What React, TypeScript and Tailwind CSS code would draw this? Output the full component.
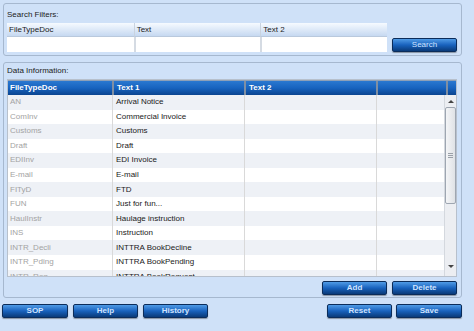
import React from 'react';

type Row = { code: string; text: string };

const rows: Row[] = [
    { code: 'AN', text: 'Arrival Notice' },
    { code: 'ComInv', text: 'Commercial Invoice' },
    { code: 'Customs', text: 'Customs' },
    { code: 'Draft', text: 'Draft' },
    { code: 'EDIInv', text: 'EDI Invoice' },
    { code: 'E-mail', text: 'E-mail' },
    { code: 'FITyD', text: 'FTD' },
    { code: 'FUN', text: 'Just for fun...' },
    { code: 'HaulInstr', text: 'Haulage instruction' },
    { code: 'INS', text: 'Instruction' },
    { code: 'INTR_Decli', text: 'INTTRA BookDecline' },
    { code: 'INTR_Pding', text: 'INTTRA BookPending' },
    { code: 'INTR_Req', text: 'INTTRA BookRequest' },
];

function BlueButton({ label, className = '' }: { label: string; className?: string }) {
    return (
        <button
            type="button"
            className={
                'h-[14px] w-[65px] rounded-[2px] border border-[#0b2c5a] bg-gradient-to-b from-[#4f9be6] via-[#1862bd] to-[#0a3b7a] text-[8px] leading-[12px] font-bold text-[#cfe3ff] shadow-[0_1px_1px_rgba(0,0,0,0.35)] ' +
                className
            }
        >
            {label}
        </button>
    );
}

function Scrollbar() {
    return (
        <div className="w-[12px] h-full bg-[#eceef2] border-l border-[#d4d8de] flex flex-col items-center">
            {/* up arrow */}
            <div className="h-[12px] flex items-center justify-center">
                <div className="w-0 h-0 border-l-[3px] border-r-[3px] border-b-[3px] border-l-transparent border-r-transparent border-b-[#444]" />
            </div>
            {/* thumb */}
            <div className="w-[11px] h-[97px] rounded-[2px] border border-[#9ea6b1] bg-gradient-to-r from-[#f4f5f7] to-[#dfe2e6] flex flex-col items-center justify-center gap-[1px]">
                <div className="w-[5px] h-[1px] bg-[#9aa0a8]" />
                <div className="w-[5px] h-[1px] bg-[#9aa0a8]" />
                <div className="w-[5px] h-[1px] bg-[#9aa0a8]" />
            </div>
            <div className="flex-1" />
            {/* down arrow */}
            <div className="h-[14px] flex items-start justify-center pt-[3px]">
                <div className="w-0 h-0 border-l-[3px] border-r-[3px] border-t-[3px] border-l-transparent border-r-transparent border-t-[#444]" />
            </div>
        </div>
    );
}

export default function App() {
    return (
        <div
            className="w-[474px] h-[331px] bg-[#cfe1f8] pt-[3px] text-[8px] leading-[10px] text-[#1e1e1e] overflow-hidden"
            style={{ fontFamily: '"Liberation Sans", Arial, sans-serif' }}
        >
            {/* Search filters */}
            <div className="ml-[3px] w-[459px] h-[53px] border border-[#a6b8cf] rounded-[3px] pl-[3px] pr-[4px]">
                <div className="h-[19px] pt-[6px] text-[#222]">Search Filters:</div>
                <div className="flex items-end gap-[5px]">
                    <div className="w-[380px] grid grid-cols-3">
                        {['FileTypeDoc', 'Text', 'Text 2'].map((h, i) => (
                            <div
                                key={h}
                                className={
                                    'h-[14px] pl-[2px] pt-[2px] bg-gradient-to-b from-[#f6faff] to-[#c6d9f1] text-[#222] border-b border-[#b9c9dd] ' +
                                    (i > 0 ? 'border-l border-l-[#c9d3df]' : '')
                                }
                            >
                                {h}
                            </div>
                        ))}
                        {[0, 1, 2].map((i) => (
                            <div
                                key={i}
                                className={'h-[15px] bg-white ' + (i > 0 ? 'border-l-2 border-[#d5dbe3]' : '')}
                            />
                        ))}
                    </div>
                    <BlueButton label="Search" className="font-normal mb-[0px]" />
                </div>
            </div>

            {/* Data information */}
            <div className="ml-[3px] mt-[6px] w-[459px] h-[236px] border border-[#a6b8cf] rounded-[3px] pl-[3px] pr-[4px]">
                <div className="h-[16px] pt-[3px] text-[#222]">Data Information:</div>
                <div className="w-[450px] border border-[#b7c0cc]">
                    {/* header */}
                    <div className="flex h-[15px] bg-gradient-to-b from-[#2a78d0] via-[#1763bf] to-[#0b4590] text-white font-bold border-t border-[#8da0b8]">
                        <div className="w-[104px] pl-[2px] pt-[2px]">FileTypeDoc</div>
                        <div className="w-[132px] pl-[3px] pt-[2px] border-l-2 border-[#7f8fa3]">Text 1</div>
                        <div className="w-[132px] pl-[3px] pt-[2px] border-l-2 border-[#7f8fa3]">Text 2</div>
                        <div className="w-[70px] border-l-2 border-[#7f8fa3]" />
                        <div className="flex-1 border-l-2 border-[#7f8fa3]" />
                    </div>
                    {/* body */}
                    <div className="flex h-[181px] overflow-hidden">
                        <div className="w-[436px] overflow-hidden">
                            {rows.map((r, i) => (
                                <div
                                    key={r.code}
                                    className={'flex h-[14.55px] items-center ' + (i % 2 === 0 ? 'bg-[#eef1f6]' : 'bg-white')}
                                >
                                    <div className="w-[104px] pl-[2px] text-[#a3a3a3]">{r.code}</div>
                                    <div className="w-[132px] h-full flex items-center pl-[3px] border-l border-[#d9d9d9] text-[#1a1a1a]">
                                        {r.text}
                                    </div>
                                    <div className="w-[132px] h-full border-l border-[#d9d9d9]" />
                                    <div className="flex-1 h-full border-l border-[#d9d9d9]" />
                                </div>
                            ))}
                        </div>
                        <div className="flex-1">
                            <Scrollbar />
                        </div>
                    </div>
                </div>
                <div className="flex justify-end gap-[5px] mt-[4px]">
                    <BlueButton label="Add" />
                    <BlueButton label="Delete" />
                </div>
            </div>

            {/* bottom buttons */}
            <div className="flex items-center mt-[6px] pl-[2px] pr-[12px]">
                <div className="flex gap-[5px]">
                    <BlueButton label="SOP" className="w-[66px]" />
                    <BlueButton label="Help" />
                    <BlueButton label="History" />
                </div>
                <div className="flex-1" />
                <div className="flex gap-[4px]">
                    <BlueButton label="Reset" />
                    <BlueButton label="Save" className="w-[66px]" />
                </div>
            </div>
        </div>
    );
}
